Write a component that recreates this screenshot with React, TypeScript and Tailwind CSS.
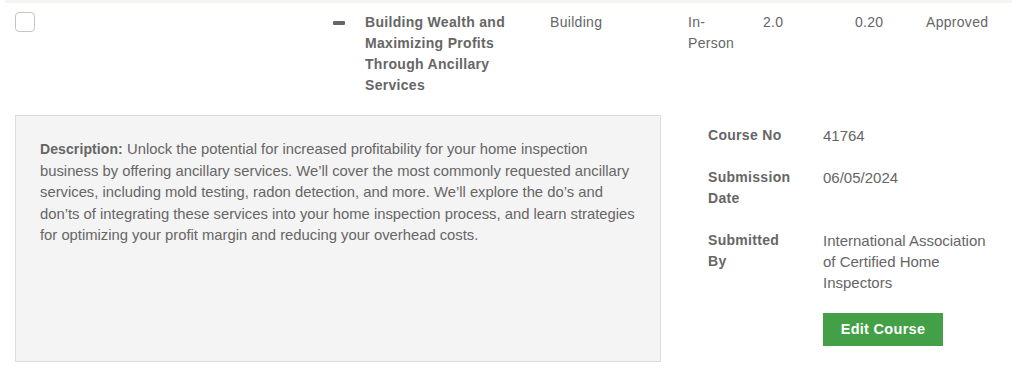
import React from "react";

const font = { fontFamily: '"Liberation Sans", Arial, sans-serif' };

function DetailRow({ label, children }: { label: string; children: React.ReactNode }) {
    return (
        <div className="flex mb-[21px]">
            <div className="w-[115px] shrink-0 pr-[28px] font-bold tracking-[0.3px] text-[#666]">{label}</div>
            <div className="w-[175px] text-[15px] whitespace-nowrap text-[#666]">{children}</div>
        </div>
    );
}

export default function App() {
    return (
        <div className="w-[1024px] h-[375px] bg-white text-[14px] leading-[21px] text-[#666] overflow-hidden" style={font}>
            {/* top divider */}
            <div className="ml-[5px] mr-[12px] h-[3px] bg-[#f2f6f3]" />

            {/* course row */}
            <div className="flex pt-[9px] h-[102px] tracking-[0.3px]">
                <div className="w-[333px] shrink-0 pl-[15px]">
                    <div className="w-[20px] h-[20px] rounded-[4px] border border-[#c4c4c4] bg-white" />
                </div>
                <div className="w-[32px] shrink-0 pt-[9px]">
                    <div className="w-[12px] h-[4px] rounded-[1px] bg-[#666]" />
                </div>
                <div className="w-[185px] shrink-0 pr-4 font-bold">
                    Building Wealth and Maximizing Profits Through Ancillary Services
                </div>
                <div className="w-[138px] shrink-0">Building</div>
                <div className="w-[75px] shrink-0 pr-[20px]">In-Person</div>
                <div className="w-[92px] shrink-0">2.0</div>
                <div className="w-[71px] shrink-0">0.20</div>
                <div className="shrink-0">Approved</div>
            </div>

            {/* expanded details */}
            <div className="flex pt-[10px]">
                <div className="ml-[15px] w-[646px] h-[247px] shrink-0 bg-[#f4f4f4] border border-[#dcdcdc] pl-[24px] pt-[23px]">
                    <p className="leading-[21.5px] text-[14.8px] whitespace-nowrap text-[#666]">
                        <span className="font-bold text-[14px] tracking-[0.1px]">Description:</span> Unlock the potential for increased profitability for your home inspection
                        <br />
                        business by offering ancillary services. We’ll cover the most commonly requested ancillary
                        <br />
                        services, including mold testing, radon detection, and more. We’ll explore the do’s and
                        <br />
                        don’ts of integrating these services into your home inspection process, and learn strategies
                        <br />
                        for optimizing your profit margin and reducing your overhead costs.
                    </p>
                </div>

                <div className="ml-[47px] pt-[10px]">
                    <DetailRow label="Course No">41764</DetailRow>
                    <DetailRow label="Submission Date">06/05/2024</DetailRow>
                    <DetailRow label="Submitted By">
                        International Association
                        <br />
                        of Certified Home
                        <br />
                        Inspectors
                    </DetailRow>
                    <div className="pl-[115px] -mt-px">
                        <button className="w-[120px] h-[33px] bg-[#43a047] text-white font-bold text-[14.5px] tracking-[0.3px]" style={font}>
                            Edit Course
                        </button>
                    </div>
                </div>
            </div>
        </div>
    );
}
